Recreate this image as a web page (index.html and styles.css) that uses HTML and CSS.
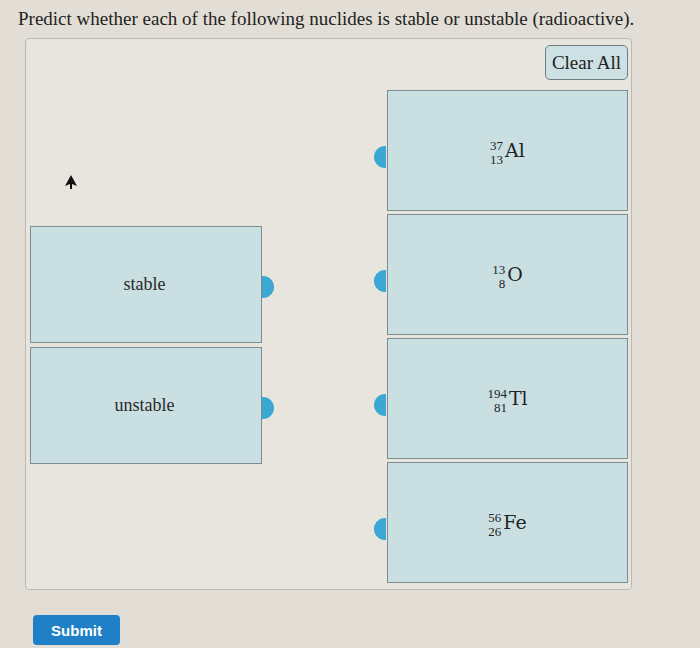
FILE: index.html
```html
<!DOCTYPE html>
<html>
<head>
<meta charset="utf-8">
<link rel="stylesheet" href="styles.css">
</head>
<body>
<div class="page">
  <p class="title">Predict whether each of the following nuclides is stable or unstable (radioactive).</p>
  <div class="panel">
    <div class="header">
      <button class="clear">Clear All</button>
    </div>
    <div class="board">
      <div class="left">
        <div class="box tab-right">stable</div>
        <div class="box tab-right">unstable</div>
      </div>
      <div class="right">
        <div class="box tab-left"><span class="nuc"><span class="nums"><span>37</span><span>13</span></span><span class="sym">Al</span></span></div>
        <div class="box tab-left"><span class="nuc"><span class="nums"><span>13</span><span>8</span></span><span class="sym">O</span></span></div>
        <div class="box tab-left"><span class="nuc"><span class="nums"><span>194</span><span>81</span></span><span class="sym">Tl</span></span></div>
        <div class="box tab-left"><span class="nuc"><span class="nums"><span>56</span><span>26</span></span><span class="sym">Fe</span></span></div>
      </div>
    </div>
    <svg class="cursor" width="14" height="16" viewBox="0 0 14 16"><path d="M7 1 L13 12 L8 10 L8 15 L6 15 L6 10 L1 12 Z" fill="#111"/></svg>
  </div>
  <div class="footer">
    <button class="submit">Submit</button>
  </div>
</div>
</body>
</html>
```
FILE: styles.css
```css
html, body {
  margin: 0;
  padding: 0;
  background: #e2ded6;
}
.page {
  width: 700px;
  height: 648px;
  overflow: hidden;
}
.title {
  margin: 0;
  padding: 9px 0 0 18px;
  height: 32px;
  box-sizing: border-box;
  font-family: "Liberation Serif", "Times New Roman", serif;
  font-size: 19px;
  line-height: 20px;
  color: #222;
  white-space: nowrap;
}
.panel {
  position: relative;
  margin-left: 25px;
  margin-top: 6px;
  width: 607px;
  height: 552px;
  box-sizing: border-box;
  background: #e8e5de;
  border: 1px solid #bdb9b1;
  border-radius: 4px;
}
.header {
  display: flex;
  justify-content: flex-end;
  padding: 6px 3px 0 0;
  height: 51px;
  box-sizing: border-box;
}
.clear {
  height: 35px;
  width: 83px;
  background: #cde0e3;
  border: 1px solid #6f7c80;
  border-radius: 5px;
  font-family: "Liberation Serif", "Times New Roman", serif;
  font-size: 19px;
  color: #222;
  padding: 0;
}
.board {
  display: flex;
  padding-left: 4px;
}
.left {
  display: flex;
  flex-direction: column;
  gap: 4px;
  width: 232px;
  margin-top: 136px;
}
.left .box {
  height: 117px;
  padding-right: 3px;
}
.right {
  display: flex;
  flex-direction: column;
  gap: 3px;
  width: 241px;
  margin-left: 125px;
}
.right .box {
  height: 121px;
}
.box {
  position: relative;
  box-sizing: border-box;
  background: #cadfe2;
  border: 1px solid #7d8c90;
  display: flex;
  align-items: center;
  justify-content: center;
  font-family: "Liberation Serif", "Times New Roman", serif;
  font-size: 18px;
  color: #2a2a2a;
}
.tab-right::after {
  content: "";
  position: absolute;
  right: -13px;
  top: 49px;
  width: 12px;
  height: 22px;
  background: #3aa8d2;
  border-radius: 0 12px 12px 0;
}
.tab-left::before {
  content: "";
  position: absolute;
  left: -14px;
  top: 55px;
  width: 12px;
  height: 22px;
  background: #3aa8d2;
  border-radius: 12px 0 0 12px;
}
.nuc {
  display: inline-flex;
  align-items: center;
  color: #222;
  margin-top: 4px;
}
.nums {
  display: flex;
  flex-direction: column;
  align-items: flex-end;
  font-family: "Liberation Serif", serif;
  font-size: 13px;
  line-height: 14px;
  margin-right: 2px;
}
.sym {
  font-family: "DejaVu Serif", "Liberation Serif", serif;
  font-size: 19px;
  margin-top: -6px;
}
.cursor {
  position: absolute;
  left: 38px;
  top: 135px;
}
.footer {
  padding: 25px 0 0 33px;
}
.submit {
  width: 87px;
  height: 30px;
  background: #1f80c8;
  border: none;
  border-radius: 4px;
  color: #fff;
  font-family: "Liberation Sans", Arial, sans-serif;
  font-weight: bold;
  font-size: 15px;
  padding: 0;
}
```
